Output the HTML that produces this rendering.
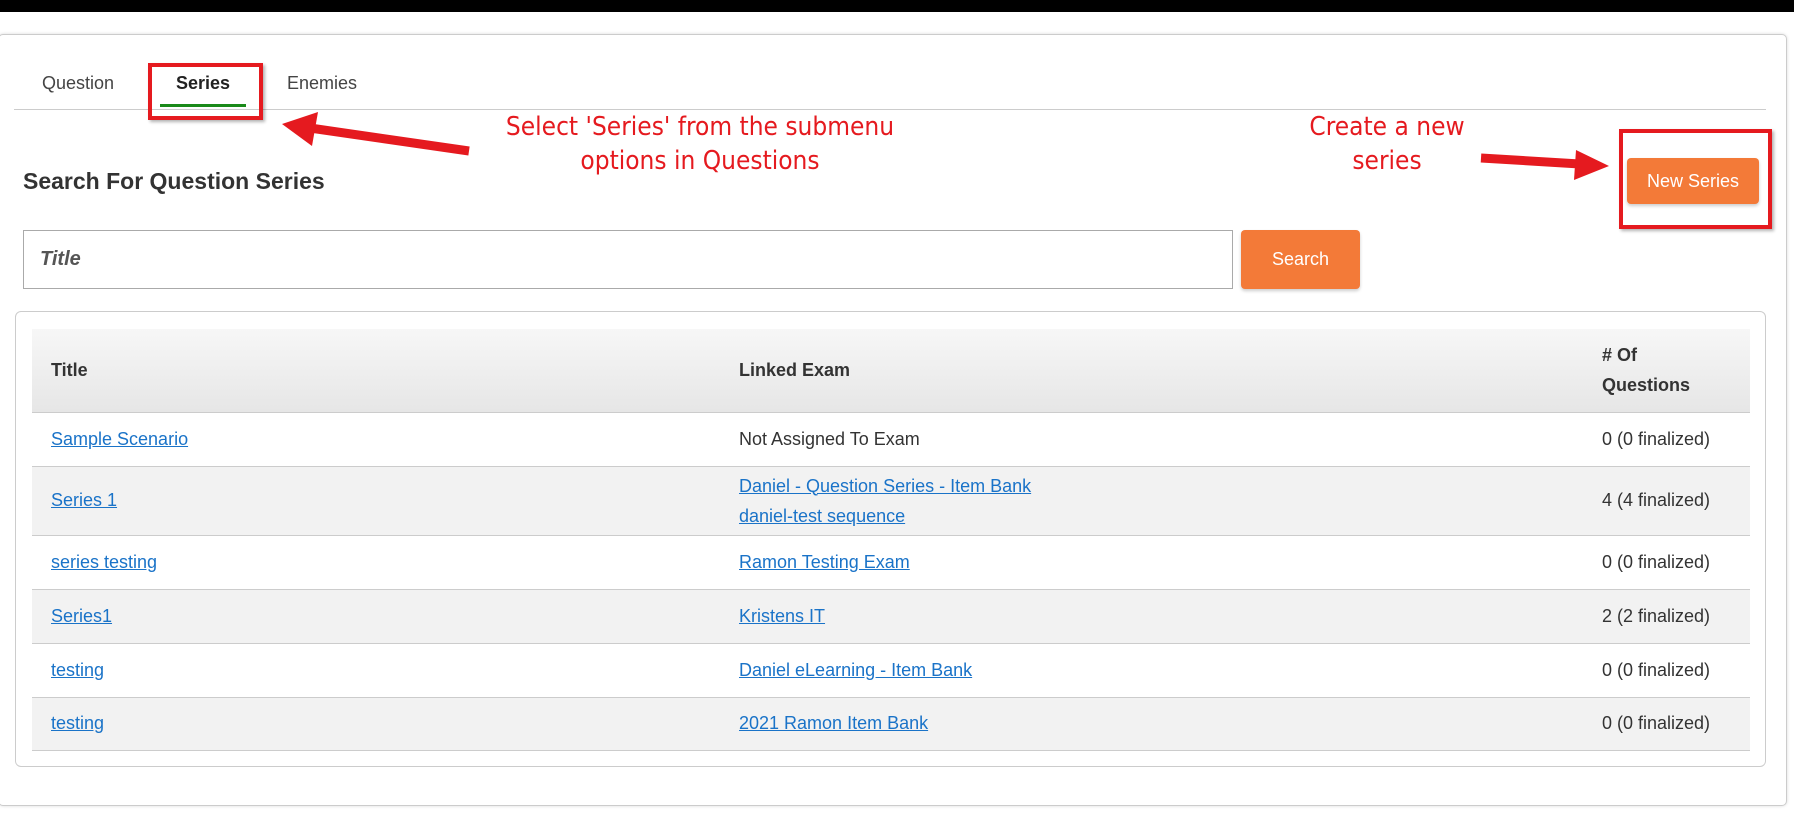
<!DOCTYPE html>
<html><head><style>
*{margin:0;padding:0;box-sizing:border-box}
body{width:1794px;height:827px;background:#fff;font-family:"Liberation Sans",sans-serif;position:relative;overflow:hidden;color:#333}
.a{position:absolute}
.bar{left:0;top:0;width:1794px;height:12px;background:#000}
.card{left:-2px;top:34px;width:1789px;height:772px;border:1px solid #ccc;border-radius:5px;box-shadow:0 0 3px rgba(0,0,0,.15)}
.tab{font-size:18px;top:73px;color:#444}
.ann{color:#e51a1f;font-size:26px;text-align:center;line-height:34px;font-family:"DejaVu Sans Condensed","Liberation Sans",sans-serif}
.btn{background:#f37a38;color:#fff;border-radius:4px;font-size:18px;display:flex;align-items:center;justify-content:center;box-shadow:0 2px 3px rgba(0,0,0,.2)}
table{border-collapse:collapse;font-size:18px}
td,th{text-align:left;padding-left:19px;border-bottom:1px solid #ccc}
th{font-weight:bold;color:#333}
a{color:#1a73c8;text-decoration:underline}
tr.g td{background:#f2f2f2}
</style></head><body>
<div class="a bar"></div>
<div class="a card"></div>
<div class="a tab" style="left:42px">Question</div>
<div class="a tab" style="left:176px;font-weight:bold;color:#222">Series</div>
<div class="a" style="left:160px;top:104px;width:86px;height:3px;background:#1a8a1a"></div>
<div class="a tab" style="left:287px">Enemies</div>
<div class="a" style="left:14px;top:109px;width:1752px;height:1px;background:#ccc"></div>
<div class="a" style="left:148px;top:63px;width:115px;height:57px;border:4px solid #e51a1f;box-shadow:2px 2px 3px rgba(0,0,0,.3)"></div>
<div class="a ann" style="left:430px;top:110px;width:540px">Select 'Series' from the submenu<br>options in Questions</div>
<div class="a ann" style="left:1220px;top:110px;width:334px">Create a new<br>series</div>
<svg class="a" style="left:0;top:0" width="1794" height="827">
<line x1="469" y1="151" x2="310" y2="128" stroke="#e51a1f" stroke-width="9"/>
<polygon points="282,124 318,112 312,146" fill="#e51a1f"/>
<line x1="1481" y1="158" x2="1580" y2="164" stroke="#e51a1f" stroke-width="9"/>
<polygon points="1609,166 1576,150 1574,180" fill="#e51a1f"/>
</svg>
<div class="a" style="left:23px;top:168px;font-size:23px;font-weight:bold;color:#333">Search For Question Series</div>
<div class="a" style="left:23px;top:230px;width:1210px;height:59px;border:1px solid #aaa"></div>
<div class="a" style="left:40px;top:248px;font-size:20px;font-weight:bold;font-style:italic;color:#555">Title</div>
<div class="a btn" style="left:1241px;top:230px;width:119px;height:59px">Search</div>
<div class="a" style="left:1619px;top:129px;width:153px;height:100px;border:4px solid #e51a1f;box-shadow:2px 2px 3px rgba(0,0,0,.3)"></div>
<div class="a btn" style="left:1627px;top:158px;width:132px;height:46px">New Series</div>
<div class="a" style="left:15px;top:311px;width:1751px;height:456px;border:1px solid #ccc;border-radius:6px"></div>
<table class="a" style="left:32px;top:329px;width:1718px">
<tr style="height:83px;background:linear-gradient(#f7f7f7,#e6e6e6)"><th style="width:688px">Title</th><th style="width:863px">Linked Exam</th><th style="line-height:30px">#&nbsp;Of<br>Questions</th></tr>
<tr style="height:54px"><td><a>Sample Scenario</a></td><td>Not Assigned To Exam</td><td>0 (0 finalized)</td></tr>
<tr class="g" style="height:69px"><td><a>Series 1</a></td><td style="line-height:30px"><a>Daniel - Question Series - Item Bank</a><br><a>daniel-test sequence</a></td><td>4 (4 finalized)</td></tr>
<tr style="height:54px"><td><a>series testing</a></td><td><a>Ramon Testing Exam</a></td><td>0 (0 finalized)</td></tr>
<tr class="g" style="height:54px"><td><a>Series1</a></td><td><a>Kristens IT</a></td><td>2 (2 finalized)</td></tr>
<tr style="height:54px"><td><a>testing</a></td><td><a>Daniel eLearning - Item Bank</a></td><td>0 (0 finalized)</td></tr>
<tr class="g" style="height:53px"><td><a>testing</a></td><td><a>2021 Ramon Item Bank</a></td><td>0 (0 finalized)</td></tr>
</table>
</body></html>
